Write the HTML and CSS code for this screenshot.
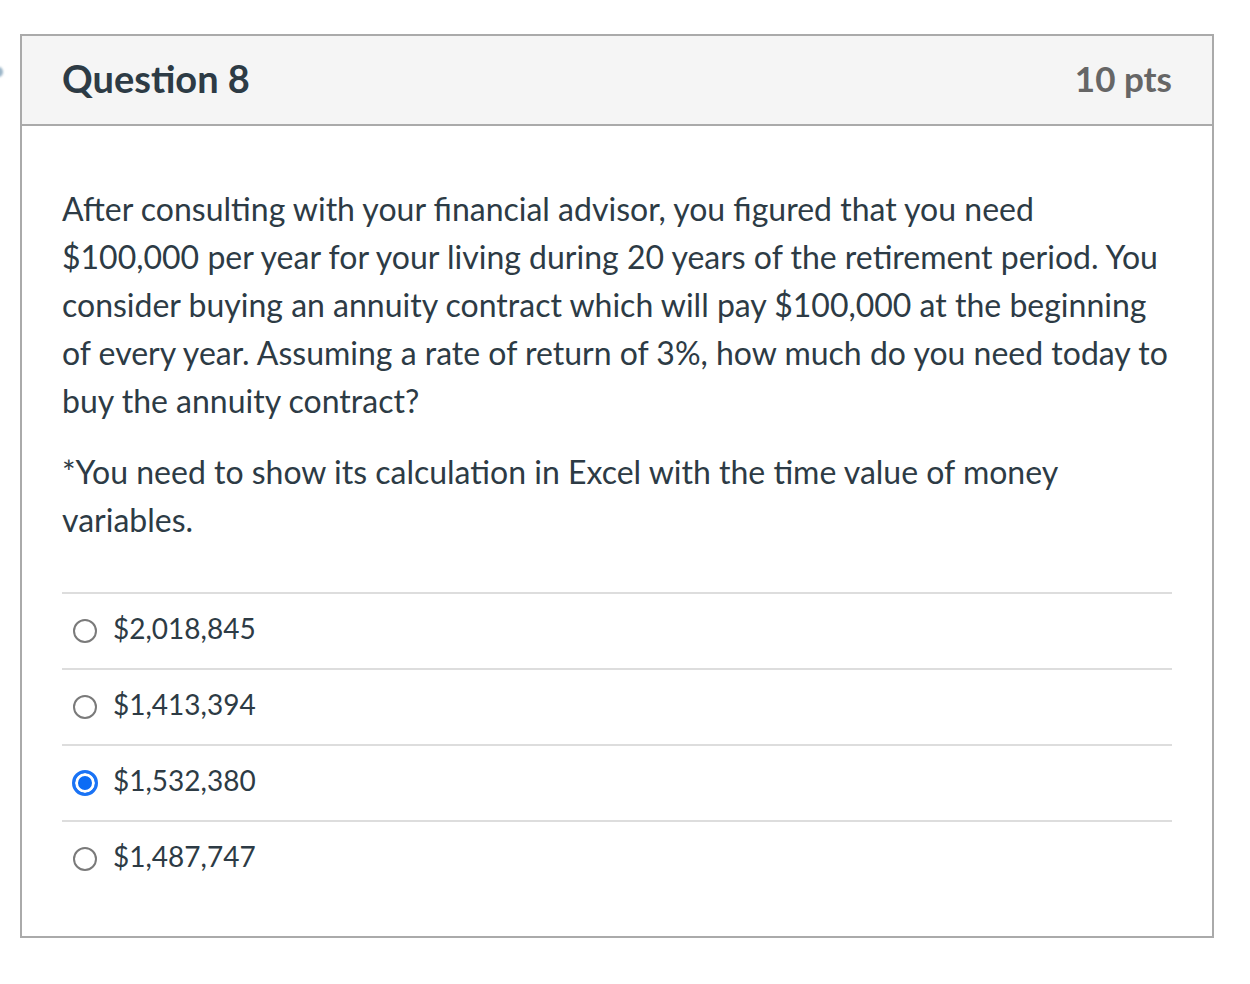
FILE: index.html
```html
<!DOCTYPE html>
<html lang="en">
<head>
<meta charset="utf-8">
<title>Question 8</title>
<link rel="stylesheet" href="styles.css">
</head>
<body>
<span class="edge-dot"></span>
<div class="question">
  <div class="q-header">
    <h2 class="q-title">Question 8</h2>
    <span class="q-points">10 pts</span>
  </div>
  <div class="q-body">
    <p class="q-text">After consulting with your financial advisor, you figured that you need $100,000 per year for your living during 20 years of the retirement period. You consider buying an annuity contract which will pay $100,000 at the beginning of every year. Assuming a rate of return of 3%, how much do you need today to buy the annuity contract?</p>
    <p class="q-text">*You need to show its calculation in Excel with the time value of money variables.</p>
    <div class="answers">
      <label class="answer"><span class="radio-box"><span class="radio"></span></span><span class="answer-text">$2,018,845</span></label>
      <label class="answer"><span class="radio-box"><span class="radio"></span></span><span class="answer-text">$1,413,394</span></label>
      <label class="answer"><span class="radio-box"><span class="radio checked"></span></span><span class="answer-text">$1,532,380</span></label>
      <label class="answer"><span class="radio-box"><span class="radio"></span></span><span class="answer-text">$1,487,747</span></label>
    </div>
  </div>
</div>
</body>
</html>
```
FILE: styles.css
```css
html, body {
  margin: 0;
  padding: 0;
  background: #fff;
}
body {
  font-family: Lato, "Open Sans", sans-serif;
  color: #2d3b45;
  padding: 34px 36px 0 20px;
  position: relative;
}
.edge-dot {
  position: absolute;
  left: -5px;
  top: 67px;
  width: 8px;
  height: 10px;
  border-radius: 50%;
  background: #9bb5c8;
  filter: blur(1px);
}
.question {
  border: 2px solid #aaaaaa;
  background: #fff;
}
.q-header {
  background: #f5f5f5;
  border-bottom: 2px solid #aaaaaa;
  height: 88px;
  display: flex;
  align-items: center;
  justify-content: space-between;
  padding: 0 40px;
}
.q-title {
  margin: 0 0 4px 0;
  font-size: 38px;
  font-weight: 700;
  color: #2d3b45;
}
.q-points {
  font-size: 35px;
  font-weight: 700;
  color: #666666;
  margin-bottom: 4px;
}
.q-body {
  padding: 59px 40px 40px 40px;
}
.q-text {
  margin: 0 0 23px 0;
  font-size: 32px;
  line-height: 48px;
}
.answers {
  margin-top: 48px;
}
.answer {
  display: flex;
  align-items: center;
  height: 74px;
  border-top: 2px solid #dddddd;
  padding-left: 10px;
  gap: 15px;
}
.answer-text {
  font-size: 28px;
  margin-bottom: 7px;
}
.radio-box {
  width: 26px;
  height: 26px;
  display: flex;
  align-items: center;
  justify-content: center;
  flex: none;
}
.radio {
  width: 24px;
  height: 24px;
  box-sizing: border-box;
  border: 2px solid #7a7a7a;
  border-radius: 50%;
  flex: none;
}
.radio.checked {
  width: 26px;
  height: 26px;
  border: 3px solid #1a73f5;
  background: #0b6cf5;
  box-shadow: inset 0 0 0 3px #fff;
}
```
